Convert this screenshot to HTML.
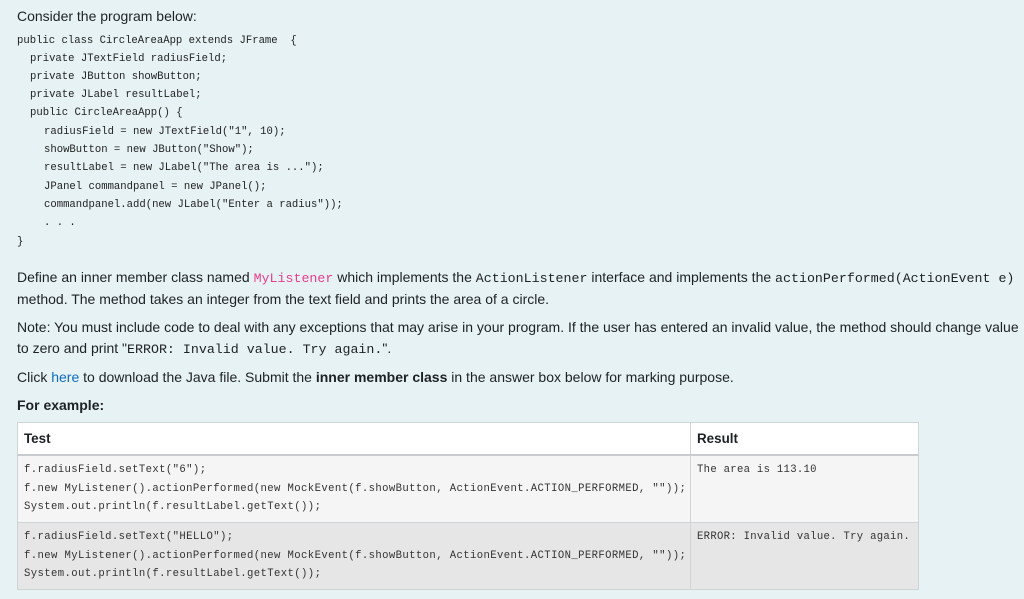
<!DOCTYPE html>
<html><head><meta charset="utf-8"><style>
body{margin:0;width:1024px;height:599px;background:#e7f2f5;font-family:"Liberation Sans",sans-serif;color:#1d2125;overflow:hidden;position:relative}
.t{position:absolute;left:17px;white-space:nowrap;font-size:14px;line-height:16px}
.c{position:absolute;white-space:pre;font-family:"Liberation Mono",monospace;font-size:10.6px;line-height:14px;color:#222}
.m{font-family:"Liberation Mono",monospace;font-size:13.3px}
table{position:absolute;left:17px;top:422px;width:901px;border-collapse:collapse;table-layout:fixed}
td,th{border:1px solid #cfd4d6;vertical-align:top;text-align:left;overflow:hidden}
th{background:#fff;height:31px;font-size:13.4px;padding:0 6px;vertical-align:middle;border-bottom:2px solid #c8cccf}
td{font-family:"Liberation Mono",monospace;font-size:10.6px;line-height:18.5px;padding:5px 6px 0;letter-spacing:0.4px;white-space:nowrap;color:#333}
td.r{letter-spacing:0.3px}
tr.a td{background:#f5f5f5;height:61px}
tr.b td{background:#e6e6e6;height:61px}
</style></head><body>
<div class="t" style="top:8px">Consider the program below:</div>
<div class="c" style="left:17px;top:34px">public class CircleAreaApp extends JFrame  {</div>
<div class="c" style="left:30px;top:52px">private JTextField radiusField;</div>
<div class="c" style="left:30px;top:70px">private JButton showButton;</div>
<div class="c" style="left:30px;top:88px">private JLabel resultLabel;</div>
<div class="c" style="left:30px;top:106px">public CircleAreaApp() {</div>
<div class="c" style="left:44px;top:125px">radiusField = new JTextField("1", 10);</div>
<div class="c" style="left:44px;top:143px">showButton = new JButton("Show");</div>
<div class="c" style="left:44px;top:161px">resultLabel = new JLabel("The area is ...");</div>
<div class="c" style="left:44px;top:180px">JPanel commandpanel = new JPanel();</div>
<div class="c" style="left:44px;top:198px">commandpanel.add(new JLabel("Enter a radius"));</div>
<div class="c" style="left:44px;top:216px">. . .</div>
<div class="c" style="left:17px;top:235px">}</div>

<div class="t" style="top:269px">Define an inner member class named <span class="m" style="color:#e83e8c">MyListener</span> which implements the <span class="m">ActionListener</span> interface and implements the <span class="m">actionPerformed(ActionEvent e)</span></div>
<div class="t" style="top:291px">method. The method takes an integer from the text field and prints the area of a circle.</div>
<div class="t" style="top:319px">Note: You must include code to deal with any exceptions that may arise in your program. If the user has entered an invalid value, the method should change value</div>
<div class="t" style="top:340px">to zero and print "<span class="m">ERROR: Invalid value. Try again.</span>".</div>
<div class="t" style="top:369px">Click <span style="color:#0f6cbf">here</span> to download the Java file. Submit the <b>inner member class</b> in the answer box below for marking purpose.</div>
<div class="t" style="top:397px"><b>For example:</b></div>

<table>
<colgroup><col style="width:673px"><col style="width:228px"></colgroup>
<tr><th>Test</th><th>Result</th></tr>
<tr class="a"><td>f.radiusField.setText("6");<br>f.new MyListener().actionPerformed(new MockEvent(f.showButton, ActionEvent.ACTION_PERFORMED, ""));<br>System.out.println(f.resultLabel.getText());</td><td class="r">The area is 113.10</td></tr>
<tr class="b"><td>f.radiusField.setText("HELLO");<br>f.new MyListener().actionPerformed(new MockEvent(f.showButton, ActionEvent.ACTION_PERFORMED, ""));<br>System.out.println(f.resultLabel.getText());</td><td class="r">ERROR: Invalid value. Try again.</td></tr>
</table>
</body></html>
